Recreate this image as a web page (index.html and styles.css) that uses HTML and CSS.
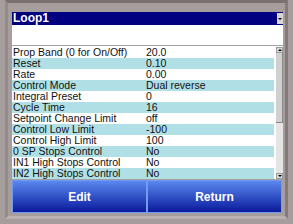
FILE: index.html
```html
<!DOCTYPE html>
<html lang="en">
<head>
    <meta charset="UTF-8">
    <title>Loop1</title>
    <link rel="stylesheet" href="styles.css">
</head>
<body>
    <div class="marco">
        <div class="panel">
            <div class="titulo">
                <span>Loop1</span>
                <div class="flecha-caja"><span class="flecha"></span></div>
            </div>
            <div class="espacio"></div>

            <div class="lista">
                <div class="filas">
                    <div class="fila"><span class="nombre">Prop Band (0 for On/Off)</span><span>20.0</span></div>
                    <div class="fila"><span class="nombre">Reset</span><span>0.10</span></div>
                    <div class="fila"><span class="nombre">Rate</span><span>0.00</span></div>
                    <div class="fila"><span class="nombre">Control Mode</span><span>Dual reverse</span></div>
                    <div class="fila"><span class="nombre">Integral Preset</span><span>0</span></div>
                    <div class="fila"><span class="nombre">Cycle Time</span><span>16</span></div>
                    <div class="fila"><span class="nombre">Setpoint Change Limit</span><span>off</span></div>
                    <div class="fila"><span class="nombre">Control Low Limit</span><span>-100</span></div>
                    <div class="fila"><span class="nombre">Control High Limit</span><span>100</span></div>
                    <div class="fila"><span class="nombre">0 SP Stops Control</span><span>No</span></div>
                    <div class="fila"><span class="nombre">IN1 High Stops Control</span><span>No</span></div>
                    <div class="fila"><span class="nombre">IN2 High Stops Control</span><span>No</span></div>
                </div>
                <div class="barra">
                    <div class="boton-barra"><span class="flecha-arriba"></span></div>
                    <div class="pulgar"></div>
                    <div class="pista"></div>
                    <div class="boton-barra"><span class="flecha"></span></div>
                </div>
            </div>

            <div class="botones">
                <button>Edit</button>
                <button>Return</button>
            </div>
        </div>
    </div>
</body>
</html>
```

FILE: styles.css
```css
body {
    margin: 0;
    background-color: #a69d9d;
    font-family: "Liberation Sans", Arial, sans-serif;
}

.marco {
    width: 293px;
    height: 224px;
    box-sizing: border-box;
    padding: 0 5px 5px 5px;
}

.panel {
    height: 100%;
    box-sizing: border-box;
    border-top: 3px solid #7b7070;
    border-left: 3px solid #958a8a;
    border-right: 3px solid #857a7a;
    border-bottom: 3px solid #b9b1b1;
    padding: 9px 2px 3px 4px;
    display: flex;
    flex-direction: column;
}

.titulo {
    height: 13px;
    background-color: #000080;
    color: #fff;
    font-size: 12px;
    font-weight: bold;
    line-height: 13px;
    padding-left: 1px;
    display: flex;
    justify-content: space-between;
}

.flecha-caja {
    width: 6px;
    height: 11px;
    margin: 1px 0;
    background-color: #d8d4d0;
    display: flex;
    align-items: center;
    justify-content: center;
}

.flecha {
    width: 0;
    height: 0;
    border-left: 2px solid transparent;
    border-right: 2px solid transparent;
    border-top: 2px solid #000;
}

.flecha-arriba {
    width: 0;
    height: 0;
    border-left: 2px solid transparent;
    border-right: 2px solid transparent;
    border-bottom: 2px solid #000;
}

.espacio {
    height: 20px;
    background-color: #fff;
    border-bottom: 1px solid #a0a0a0;
}

.lista {
    display: flex;
    background-color: #fff;
    padding-top: 1px;
}

.filas {
    flex: 1;
    padding-right: 2px;
}

.fila {
    height: 11px;
    display: flex;
    font-size: 10.5px;
    line-height: 11px;
    color: #111;
    padding-left: 1px;
}

.fila:nth-child(even) {
    background-color: #b0e0e6;
}

.nombre {
    width: 133px;
}

.barra {
    width: 7px;
    display: flex;
    flex-direction: column;
    background-color: #e4e4e4;
}

.boton-barra {
    height: 6px;
    background-color: #d8d8d8;
    border: 1px solid #9a9a9a;
    box-sizing: border-box;
    display: flex;
    align-items: center;
    justify-content: center;
}

.pulgar {
    height: 70px;
    background-color: #d0d0d0;
    border-right: 1px solid #888;
    border-bottom: 1px solid #888;
    box-sizing: border-box;
}

.pista {
    flex: 1;
}

.botones {
    flex: 1;
    display: flex;
    margin-top: 1px;
    margin-right: 1px;
}

button {
    flex: 1;
    border: 1px solid #6f9cf2;
    background: linear-gradient(#5a88ef, #0a1a9c);
    color: #fff;
    font-family: "Liberation Sans", Arial, sans-serif;
    font-size: 12px;
    font-weight: bold;
    padding: 0;
}
```
